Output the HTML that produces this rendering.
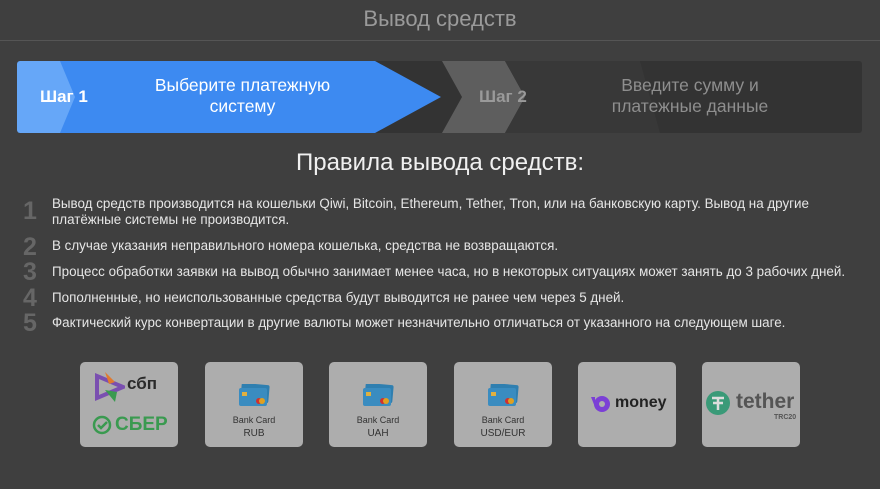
<!DOCTYPE html>
<html><head><meta charset="utf-8"><style>
body{margin:0;width:880px;height:489px;background:#3f3f3f;font-family:"Liberation Sans","DejaVu Sans",sans-serif;overflow:hidden;position:relative}
.t{position:absolute;left:0;width:880px;text-align:center}
.card{position:absolute;top:362px;width:98px;height:85px;background:#adadad;border-radius:5px}
.bc{position:absolute;left:0;width:100%;text-align:center;color:#333;font-size:9px}
.r{position:absolute;left:52px;color:#e6e6e6;font-size:13.4px;line-height:16px;white-space:nowrap}
.n{position:absolute;left:23px;color:#666;font-size:25px;font-weight:bold}
</style></head><body>
<div class="t" style="top:6px;font-size:22px;color:#9a9a9a">Вывод средств</div>
<div style="position:absolute;left:0;top:40px;width:880px;height:1px;background:#555"></div>
<svg style="position:absolute;left:0;top:0" width="880" height="140">
<rect x="17" y="61" width="845" height="72" rx="3" fill="#333"/>
<polygon points="20,61 375,61 441,97 375,133 20,133" fill="#3d8af1"/>
<rect x="17" y="61" width="10" height="72" rx="3" fill="#66a7f8"/>
<polygon points="20,61 60,61 75,97 60,133 20,133" fill="#66a7f8"/>
<polygon points="442,61 505,61 525,97 505,133 442,133 462,97" fill="#5e5e5e"/>
<polygon points="505,61 640,61 660,133 505,133 525,97" fill="#383838"/>
</svg>
<div style="position:absolute;left:40px;top:87px;color:#fff;font-weight:bold;font-size:17px">Шаг 1</div>
<div style="position:absolute;left:110px;top:75px;width:265px;text-align:center;color:#fff;font-size:17.5px;line-height:21px">Выберите платежную<br>систему</div>
<div style="position:absolute;left:479px;top:87px;color:#9a9a9a;font-weight:bold;font-size:17px">Шаг 2</div>
<div style="position:absolute;left:570px;top:75px;width:240px;text-align:center;color:#8e8e8e;font-size:17.5px;line-height:21px">Введите сумму и<br>платежные данные</div>
<div class="t" style="top:149px;font-size:24px;color:#f0f0f0">Правила вывода средств:</div>
<div class="n" style="top:197px">1</div><div class="r" style="top:196px">Вывод средств производится на кошельки Qiwi, Bitcoin, Ethereum, Tether, Tron, или на банковскую карту. Вывод на другие<br>платёжные системы не производится.</div>
<div class="n" style="top:233px">2</div><div class="r" style="top:238px">В случае указания неправильного номера кошелька, средства не возвращаются.</div>
<div class="n" style="top:258px">3</div><div class="r" style="top:264px">Процесс обработки заявки на вывод обычно занимает менее часа, но в некоторых ситуациях может занять до 3 рабочих дней.</div>
<div class="n" style="top:284px">4</div><div class="r" style="top:290px">Пополненные, но неиспользованные средства будут выводится не ранее чем через 5 дней.</div>
<div class="n" style="top:309px">5</div><div class="r" style="top:315px">Фактический курс конвертации в другие валюты может незначительно отличаться от указанного на следующем шаге.</div>

<div class="card" style="left:80px">
<svg style="position:absolute;left:15px;top:8px" width="30" height="34"><polygon points="2,6 28,17 2,28" fill="none" stroke="#7a4fb0" stroke-width="4"/><polygon points="10,2 20,12 14,14" fill="#e07a30"/><polygon points="10,20 20,32 22,22" fill="#3a9a50"/></svg>
<div style="position:absolute;left:47px;top:12px;font-weight:bold;font-size:17px;color:#2a2a2a">сбп</div>
<svg style="position:absolute;left:12px;top:53px" width="20" height="20"><circle cx="10" cy="10" r="8" fill="none" stroke="#3a9a50" stroke-width="2.5"/><path d="M6 10l3 3 6-6" fill="none" stroke="#3a9a50" stroke-width="2.5"/></svg>
<div style="position:absolute;left:35px;top:52px;font-weight:bold;font-size:19px;color:#3a9a50">СБЕР</div>
</div>
<div class="card" style="left:205px"><svg style="position:absolute;left:33px;top:22px" width="32" height="24"><rect x="3" y="0" width="28" height="18" rx="2" fill="#2f7fb0" transform="rotate(5 17 9)"/><rect x="1" y="4" width="28" height="18" rx="2" fill="#3a8cc0"/><rect x="4" y="8" width="5" height="4" fill="#e0b040"/><circle cx="21" cy="17" r="3" fill="#d03030"/><circle cx="24" cy="17" r="3" fill="#e0a020"/></svg><div class="bc" style="top:53px">Bank Card</div><div class="bc" style="top:66px;font-size:10px">RUB</div></div>
<div class="card" style="left:329px"><svg style="position:absolute;left:33px;top:22px" width="32" height="24"><rect x="3" y="0" width="28" height="18" rx="2" fill="#2f7fb0" transform="rotate(5 17 9)"/><rect x="1" y="4" width="28" height="18" rx="2" fill="#3a8cc0"/><rect x="4" y="8" width="5" height="4" fill="#e0b040"/><circle cx="21" cy="17" r="3" fill="#d03030"/><circle cx="24" cy="17" r="3" fill="#e0a020"/></svg><div class="bc" style="top:53px">Bank Card</div><div class="bc" style="top:66px;font-size:10px">UAH</div></div>
<div class="card" style="left:454px"><svg style="position:absolute;left:33px;top:22px" width="32" height="24"><rect x="3" y="0" width="28" height="18" rx="2" fill="#2f7fb0" transform="rotate(5 17 9)"/><rect x="1" y="4" width="28" height="18" rx="2" fill="#3a8cc0"/><rect x="4" y="8" width="5" height="4" fill="#e0b040"/><circle cx="21" cy="17" r="3" fill="#d03030"/><circle cx="24" cy="17" r="3" fill="#e0a020"/></svg><div class="bc" style="top:53px">Bank Card</div><div class="bc" style="top:66px;font-size:10px">USD/EUR</div></div>
<div class="card" style="left:578px"><svg style="position:absolute;left:7px;top:33px" width="26" height="18"><path d="M0 2h6l4 10V2h0" fill="#7b3fd6"/><circle cx="17" cy="9" r="8" fill="#7b3fd6"/><circle cx="17" cy="9" r="3" fill="#adadad"/></svg><div style="position:absolute;left:37px;top:32px;font-weight:bold;font-size:16px;color:#222">money</div></div>
<div class="card" style="left:702px"><svg style="position:absolute;left:3px;top:28px" width="26" height="26"><circle cx="13" cy="13" r="12" fill="#3a9a78"/><path d="M7 8h12M13 8v12M8 13h10" stroke="#ddd" stroke-width="2.5" fill="none"/></svg><div style="position:absolute;left:34px;top:28px;font-weight:bold;font-size:21px;color:#555">tether</div><div style="position:absolute;left:72px;top:52px;font-size:7px;color:#555;font-weight:bold">TRC20</div></div>
</body></html>
